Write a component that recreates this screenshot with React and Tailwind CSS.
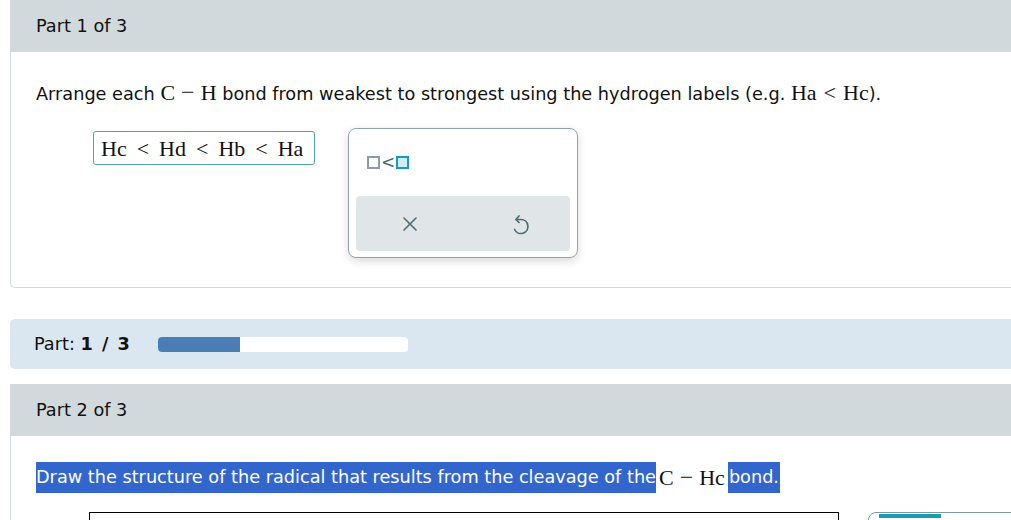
import React from 'react';

const serif = { fontFamily: '"Liberation Serif", "Times New Roman", serif' };

const UndoIcon = () => (
    <svg width="20" height="22" viewBox="0 0 20 22" fill="none" stroke="#4b6b78" strokeWidth="1.7" strokeLinecap="round" strokeLinejoin="round">
        <path d="M5 6.5 H10 A7 7 0 1 1 3.6 16.5" />
        <path d="M8 3 L5 6.5 L8 9.5" />
    </svg>
);

const XIcon = () => (
    <svg width="16" height="16" viewBox="0 0 16 16" fill="none" stroke="#4b6b78" strokeWidth="1.6" strokeLinecap="round">
        <path d="M2 2 L14 14 M14 2 L2 14" />
    </svg>
);

const Lt = () => <span className="mx-[10px]">&lt;</span>;
const Minus = () => <span className="mx-[6px] text-[24px] leading-none">−</span>;

const App = () => {
    return (
        <div className="w-[1011px] h-[520px] overflow-hidden bg-white text-[#111] text-[17.7px]" style={{ fontFamily: '"DejaVu Sans", Verdana, sans-serif' }}>
            <div className="pl-[10px]">

                {/* Part 1 card */}
                <div className="border-l border-b border-[#d3dadd] rounded-bl-[5px] w-[1010px]">
                    <div className="h-[52px] bg-[#d1d9dc] flex items-center pl-[25px]">Part 1 of 3</div>
                    <div className="h-[235px] pl-[25px] pt-[24px]">
                        <p className="flex items-baseline whitespace-nowrap h-[26px]">
                            <span>Arrange each&nbsp;</span>
                            <span style={serif} className="text-[22px]">C<Minus />H</span>
                            <span>&nbsp;bond from weakest to strongest using the hydrogen labels (e.g.&nbsp;</span>
                            <span style={serif} className="text-[22px]">Ha<span className="mx-[7px]">&lt;</span>Hc</span>
                            <span>).</span>
                        </p>
                        <div className="flex items-start mt-[26px]">
                            <div className="ml-[57px] mt-[3px] w-[222px] h-[34px] border border-[#4fa0b3] rounded-[3px] flex items-center pl-[7px] text-[22px] text-[#111] whitespace-nowrap" style={serif}>
                                Hc<Lt />Hd<Lt />Hb<Lt />Ha
                            </div>
                            <div className="ml-[33px] w-[230px] h-[130px] border border-[#8fa5ad] rounded-[8px] bg-white shadow-[0_3px_8px_rgba(0,0,0,0.15)] px-[7px] pt-[24px]">
                                <div className="flex items-center pl-[11px] h-[18px]">
                                    <span className="w-[13px] h-[13px] border-2 border-[#8a9ea6]" />
                                    <span className="text-[#4b6b78] text-[17px] leading-none mx-[1px]">&lt;</span>
                                    <span className="w-[13px] h-[13px] border-2 border-[#1a9bb5] bg-[#cdeef3]" />
                                </div>
                                <div className="mt-[25px] h-[55px] bg-[#e0e6e8] rounded-[4px] flex items-center">
                                    <div className="w-1/2 flex justify-center"><XIcon /></div>
                                    <div className="w-1/2 flex justify-center pl-[8px]"><UndoIcon /></div>
                                </div>
                            </div>
                        </div>
                    </div>
                </div>

                {/* Progress bar */}
                <div className="mt-[31px] h-[50px] bg-[#dae6f0] rounded-l-[5px] flex items-center pl-[24px] w-[1010px]">
                    <span>Part:&nbsp;<b className="tracking-[1.5px]">1 / 3</b></span>
                    <div className="ml-[27px] w-[250px] h-[15px] bg-white rounded-[4px] overflow-hidden">
                        <div className="w-[82px] h-full bg-[#4a7db5]" />
                    </div>
                </div>

                {/* Part 2 card */}
                <div className="mt-[15px] border-l border-[#d3dadd] w-[1010px]">
                    <div className="h-[52px] bg-[#d1d9dc] flex items-center pl-[25px]">Part 2 of 3</div>
                    <div className="pl-[25px] pt-[26px]">
                        <p className="flex items-center whitespace-nowrap h-[31px]">
                            <span className="bg-[#3366cc] text-white h-[31px] flex items-center">Draw the structure of the radical that results from the cleavage of the</span>
                            <span style={serif} className="text-[22px] px-[3px]">C<Minus />Hc</span>
                            <span className="bg-[#3366cc] text-white h-[31px] flex items-center px-[1px]">bond.</span>
                        </p>
                        <div className="flex mt-[19px]">
                            <div className="shrink-0 ml-[53px] w-[750px] h-[40px] border border-black" />
                            <div className="shrink-0 ml-[29px] w-[160px] h-[40px] border border-[#7a9aa3] rounded-[8px] pt-[1px] pl-[10px]">
                                <div className="w-[62px] h-[4px] bg-[#1a9bb5]" />
                            </div>
                        </div>
                    </div>
                </div>
            </div>
        </div>
    );
};

export default App;
